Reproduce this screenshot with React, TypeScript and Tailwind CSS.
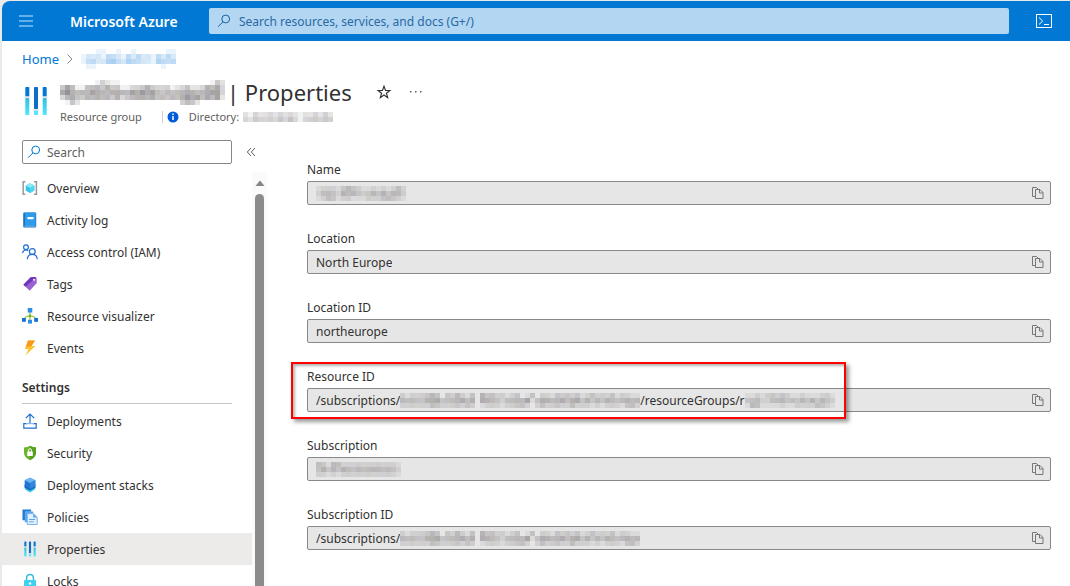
import type { ReactNode } from "react";

type MosaicProps = {
  rows: string[];
  colors?: string[];
  cell?: number;
};

const GRAYS = ["#6b6866", "#7c7480", "#6f7276", "#857a76"];
const BLUES = ["#2b88d8", "#3a93de"];

// Pixelated block used for redacted values, each digit is a cell's strength
function Mosaic({ rows, colors = GRAYS, cell = 5 }: MosaicProps) {
  const width = rows[0].length * cell;
  const height = rows.length * cell;
  return (
    <svg
      width={width}
      height={height}
      viewBox={`0 0 ${width} ${height}`}
      className="shrink-0"
      shapeRendering="crispEdges"
      aria-hidden="true"
    >
      {rows.map((row, y) =>
        row.split("").map((d, x) => (
          <rect
            key={`${x}-${y}`}
            x={x * cell}
            y={y * cell}
            width={cell}
            height={cell}
            fill={colors[(x * 3 + y) % colors.length]}
            opacity={Number(d) / 10}
          />
        ))
      )}
    </svg>
  );
}

const crumbMosaic = [
  "0001100100100000011",
  "1222133213232213232",
  "1332244324332214333",
  "0110000000000000100",
];

const titleMosaic = [
  "000000013211000000000000000000142",
  "465114554544113345433312342235563",
  "685555665556556676654545565556673",
  "356445555545345565645454676656562",
  "014200000000000000000000354200000",
];

const directoryMosaic = ["213223232321223232", "324333343431334343"];

const nameMosaic = ["122213432112121232", "234324443234343442", "123312211122233321"];

const resourceMosaic = ["112123232112111221", "334223443334343432", "143111121122223321"];

const subscriptionMosaic = ["33143222222222221", "34343443434443432", "22121222222222221"];

const guidMosaic = [
  "212223430324213043322123013022132323123222312211",
  "434334553344535054432344451354445355343434434444",
  "222222332223232012221223320232232232221212221332",
];

function Magnifier({ className }: { className: string }) {
  return (
    <svg viewBox="0 0 14 14" fill="none" stroke="currentColor" className={className} aria-hidden="true">
      <circle cx="8.7" cy="5" r="3.9" />
      <path d="M5.9 7.9 1 12.8" />
    </svg>
  );
}

function PropertiesIcon({ className }: { className: string }) {
  return (
    <svg viewBox="0 0 24 30" className={className} aria-hidden="true">
      <defs>
        <linearGradient id="bar" x1="0" y1="0" x2="0" y2="1">
          <stop offset="0" stopColor="#32bedd" />
          <stop offset="1" stopColor="#50e6ff" />
        </linearGradient>
      </defs>
      <rect x="1.3" y="12" width="4" height="17" rx=".8" fill="url(#bar)" />
      <rect x="1.3" y="1" width="4" height="9.5" rx=".8" fill="#0078d4" />
      <rect x="10" y="24.5" width="4" height="4.5" rx=".8" fill="#50e6ff" />
      <rect x="10" y="1" width="4" height="22" rx=".8" fill="#0f6cc8" />
      <rect x="18.7" y="12" width="4" height="17" rx=".8" fill="url(#bar)" />
      <rect x="18.7" y="1" width="4" height="9.5" rx=".8" fill="#0078d4" />
      <path d="M.5 11.2h5.6M9.2 23.8h5.6M17.9 11.2h5.6" stroke="#d8dadd" strokeWidth="1.2" />
    </svg>
  );
}

function CopyIcon() {
  return (
    <svg viewBox="0 0 14 14" fill="none" stroke="#777" className="h-3.5 w-3.5" aria-hidden="true">
      <path d="M4.5 10.5h-3v-9h4L7 3" />
      <path d="M4.5 3.5H9l3 3v6H4.5z" />
      <path d="M8.5 3.5V7H12" />
    </svg>
  );
}

function NavSvg({ children }: { children: ReactNode }) {
  return (
    <svg viewBox="0 0 16 16" fill="none" className="h-4 w-4 shrink-0" aria-hidden="true">
      {children}
    </svg>
  );
}

const icons: Record<string, ReactNode> = {
  Overview: (
    <NavSvg>
      <path d="M3.4 1.8H1.2v12.4h2.2M12 1.8h2.4v12.4H12" stroke="#999" strokeWidth="1.5" />
      <path d="m8 3.2 4.3 2.4v4.9L8 13l-4.3-2.5V5.6z" fill="#32c5e8" />
      <path d="m8 3.2 4.3 2.4L8 8 3.7 5.6z" fill="#8beafa" />
      <path d="M8 8v5l4.3-2.5V5.6z" fill="#50d6f2" />
    </NavSvg>
  ),
  "Activity log": (
    <NavSvg>
      <rect x="1.2" y=".6" width="13" height="14.8" rx="1" fill="#1b72c0" />
      <rect x="3" y=".6" width="10.6" height="13.2" rx=".6" fill="#2f9cea" />
      <path d="M2.4 14.2h11.2" stroke="#8cc9f5" strokeWidth=".8" />
      <rect x="5.4" y="5" width="6.2" height="2.2" rx=".4" fill="#fff" />
    </NavSvg>
  ),
  "Access control (IAM)": (
    <NavSvg>
      <g stroke="#1f6ed4" strokeWidth="1.2">
        <circle cx="4" cy="3.2" r="2.4" />
        <circle cx="10.3" cy="7.5" r="2.9" />
        <path d="M.7 9.2C.8 7.2 2 6 4 6c.9 0 1.6.2 2.2.7M5.4 15.2c.1-3 1.9-4.8 4.9-4.8s4.8 1.8 4.9 4.8" />
      </g>
    </NavSvg>
  ),
  Tags: (
    <NavSvg>
      <path d="M8.7 1.2 13.5.9l1.1.9.2 5.1-7.1 7.8-6.3-6z" fill="#9a63d3" />
      <path d="M8.7 1.2 13.5.9 14 2 3.4 10.6l-2-1.9z" fill="#6d35b8" />
      <circle cx="12" cy="3.8" r="1.1" fill="#efe3fb" />
    </NavSvg>
  ),
  "Resource visualizer": (
    <NavSvg>
      <path d="M8 4v8M2.5 11.5c0-2.4 2-3.5 5.5-3.5s5.5 1.1 5.5 3.5" stroke="#86c440" strokeWidth="1.2" />
      <rect x="5.7" y="0" width="4.6" height="4.5" fill="#2b8fe8" />
      <rect x="0" y="10" width="3.8" height="3.8" fill="#1570cf" />
      <rect x="12.2" y="10" width="3.8" height="3.8" fill="#1570cf" />
      <rect x="6" y="11.8" width="4" height="3.8" fill="#2b8fe8" />
      <circle cx="8" cy="8" r="1.4" fill="#6fb52c" />
    </NavSvg>
  ),
  Events: (
    <NavSvg>
      <path d="M6 .6h7L9.5 6h4L3.4 15.6 6.6 9H2.8z" fill="#fdc22f" />
      <path d="M6 .6h7L9.5 6 4 7z" fill="#f79a1c" />
    </NavSvg>
  ),
  Deployments: (
    <NavSvg>
      <path d="M8 10V1.2M3.8 5.2 8 1l4.2 4.2" stroke="#1f6ed4" strokeWidth="1.2" />
      <path d="M5 10.6H1.8v4.6h12.4v-4.6H11" stroke="#1f6ed4" strokeWidth="1.2" />
      <path d="M4 10.6h8" stroke="#8ab6ee" strokeWidth="1.2" />
    </NavSvg>
  ),
  Security: (
    <NavSvg>
      <path d="M8 .8c2 1.4 3.8 1.6 6 1.7v5c0 3.7-2.5 6-6 7.8-3.5-1.8-6-4.1-6-7.8v-5C4.2 2.4 6 2.2 8 .8z" fill="#6bb52c" />
      <path d="M8 .8c2 1.4 3.8 1.6 6 1.7v5c0 3.7-2.5 6-6 7.8z" fill="#569f20" />
      <rect x="5.2" y="6.5" width="5.6" height="4.5" rx=".5" fill="#fff" />
      <path d="M6.5 7V5.3a1.5 1.5 0 0 1 3 0V7" stroke="#fff" />
    </NavSvg>
  ),
  "Deployment stacks": (
    <NavSvg>
      <path d="m2.8 9.5 5.2 3 5.2-3v2.8L8 15.5l-5.2-3.2z" fill="#36c3ea" />
      <path d="m2.5 7.5 5.5 3 5.5-3v2.9L8 13.6l-5.5-3.2z" fill="#1664b8" />
      <path d="m8 .8 5.3 2.5V9L8 12 2.7 9V3.3z" fill="#1f77d2" />
      <path d="m8 .8 5.3 2.5L8 6 2.7 3.3z" fill="#6db6f5" />
      <path d="M8 6v6l5.3-3V3.3z" fill="#3486dc" />
    </NavSvg>
  ),
  Policies: (
    <NavSvg>
      <path d="M.5.5h8.6v2.3H3.3v8.4H.5z" fill="#1f7ad4" />
      <path d="M2.8 2.6h8.4v2H5.4v8.6H2.8z" fill="#5ea9ec" />
      <path d="M5.3 4.6h6l3.9 3.9v7H5.3z" fill="#e4f1fd" stroke="#5aa3e8" strokeWidth=".8" />
      <path d="M11.2 4.6v4h4z" fill="#5aa3e8" />
      <path d="M7 10.5h6.3M7 12.8h4.8" stroke="#5aa3e8" />
    </NavSvg>
  ),
  Properties: <PropertiesIcon className="h-4 w-4 shrink-0" />,
  Locks: (
    <NavSvg>
      <path d="M4.6 7.5V4.8a3.4 3.4 0 0 1 6.8 0v2.7" stroke="#32bedd" strokeWidth="1.5" />
      <rect x="2" y="7" width="12" height="8.5" rx="1" fill="#40d0f0" />
      <circle cx="8" cy="10.5" r="1.2" fill="#fff" />
    </NavSvg>
  ),
};

const generalItems = [
  "Overview",
  "Activity log",
  "Access control (IAM)",
  "Tags",
  "Resource visualizer",
  "Events",
];

const settingsItems = [
  "Deployments",
  "Security",
  "Deployment stacks",
  "Policies",
  "Properties",
  "Locks",
];

type Field = {
  id: string;
  label: string;
  parts: (string | string[])[];
  highlighted?: boolean;
};

const fields: Field[] = [
  { id: "name", label: "Name", parts: [nameMosaic] },
  { id: "location", label: "Location", parts: ["North Europe"] },
  { id: "location-id", label: "Location ID", parts: ["northeurope"] },
  {
    id: "resource-id",
    label: "Resource ID",
    parts: ["/subscriptions/", guidMosaic, "/resourceGroups/r", resourceMosaic],
    highlighted: true,
  },
  { id: "subscription", label: "Subscription", parts: [subscriptionMosaic] },
  { id: "subscription-id", label: "Subscription ID", parts: ["/subscriptions/", guidMosaic] },
];

function NavItem({ label }: { label: string }) {
  const active = label === "Properties";
  return (
    <li>
      <a
        href="#"
        aria-current={active ? "page" : undefined}
        className={`flex h-8 items-center gap-[9px] pl-5 ${active ? "bg-[#edebe9]" : "hover:bg-[#f3f2f1]"}`}
      >
        {icons[label]}
        <span className="pt-0.5">{label}</span>
      </a>
    </li>
  );
}

function PropertyField({ id, label, parts, highlighted }: Field) {
  const hasText = parts.some((p) => typeof p === "string");
  return (
    <div className="relative">
      <label htmlFor={id} className="block h-5 leading-[18px]">
        {label}
      </label>
      <div className="flex h-6 items-center rounded-xs border border-[#8a8886] bg-[#e6e6e6] pr-[5px] pl-2">
        {!hasText && <Mosaic rows={parts[0] as string[]} />}
        {parts.map((part, i) =>
          typeof part === "string" ? (
            <input
              key={i}
              id={i === 0 ? id : undefined}
              aria-label={i === 0 ? undefined : label}
              readOnly
              value={part}
              className="field-sizing-content bg-transparent pt-0.5 outline-none"
            />
          ) : (
            hasText && <Mosaic key={i} rows={part} />
          )
        )}
        {!hasText && <input id={id} readOnly value="" className="min-w-0 flex-1 bg-transparent outline-none" />}
        <button type="button" aria-label={`Copy ${label}`} className="ml-auto">
          <CopyIcon />
        </button>
      </div>
      {highlighted && (
        <div className="pointer-events-none absolute -top-1.5 -left-4 h-[57px] w-[555px] border-2 border-[#ff0000] shadow-[3px_3px_4px_rgba(0,0,0,0.4),inset_2px_2px_3px_rgba(0,0,0,0.3)]" />
      )}
    </div>
  );
}

export default function App() {
  return (
    <div className="h-screen overflow-hidden bg-[#eaeaea] pt-px pl-0.5 font-['Noto_Sans','Segoe_UI',sans-serif] text-[12px] leading-4 text-[#323130]">
      <div className="flex h-full flex-col overflow-hidden rounded-tl-lg bg-white">
        <header className="flex h-10 shrink-0 items-center bg-[#0078d4] pr-[18px] pl-4 text-white">
          <button type="button" aria-label="Show portal menu" className="flex h-6 w-4 flex-col items-center justify-center gap-[3px]">
            <span className="h-0.5 w-3.5 bg-[#66b0ea]" />
            <span className="h-0.5 w-3.5 bg-[#66b0ea]" />
            <span className="h-0.5 w-3.5 bg-[#66b0ea]" />
          </button>
          <a href="#" className="ml-9 w-[139px] shrink-0 pt-0.5 text-[14px] font-semibold whitespace-nowrap">
            Microsoft Azure
          </a>
          <div className="flex h-[26px] flex-1 items-center gap-2 rounded-xs bg-[#b3d6f2] px-2 text-[#1c5f9f]">
            <Magnifier className="h-3.5 w-3.5" />
            <input
              type="text"
              aria-label="Search resources, services, and docs (G+/)"
              placeholder="Search resources, services, and docs (G+/)"
              className="flex-1 bg-transparent pt-0.5 outline-none placeholder:text-[#2a69a5]"
            />
          </div>
          <button type="button" aria-label="Cloud Shell" className="ml-[27px]">
            <svg viewBox="0 0 16 14" fill="none" stroke="#fff" className="h-3.5 w-4">
              <rect x=".5" y=".5" width="15" height="13" />
              <path d="M3 3.5 6.7 7 3 10.5M8 10.5h5" />
            </svg>
          </button>
        </header>

        <nav aria-label="Breadcrumb" className="flex h-9 shrink-0 items-center gap-2 pl-5">
          <a href="#" className="text-[13px] text-[#0078d4]">
            Home
          </a>
          <svg viewBox="0 0 6 12" fill="none" stroke="#8a8886" className="h-3 w-1.5" aria-hidden="true">
            <path d="m.5 1.5 4.5 4.5-4.5 4.5" />
          </svg>
          <Mosaic rows={crumbMosaic} colors={BLUES} />
        </nav>

        <div className="flex h-[63px] shrink-0 gap-3 pt-px pl-[22px]">
          <PropertiesIcon className="mt-2 h-[30px] w-6" />
          <div>
            <div className="flex h-7 items-center">
              <h1 className="flex items-center gap-0.5 text-[22px] leading-7">
                <Mosaic rows={titleMosaic} />
                <span className="whitespace-pre">| Properties</span>
              </h1>
              <button type="button" aria-label="Add to favorites" className="ml-6">
                <svg viewBox="0 0 16 16" fill="none" stroke="#323130" strokeWidth="1.1" className="h-4 w-4">
                  <path d="m8 2.2 1.5 4.3h4.400l-3.500 2.700 1.300 4.400L8 11l-3.700 2.600 1.300-4.400-3.500-2.700h4.400z" />
                </svg>
              </button>
              <button type="button" aria-label="More actions" className="ml-4">
                <svg viewBox="0 0 16 16" fill="#605e5c" className="h-4 w-4">
                  <rect x="2" y="7" width="1.5" height="1.5" />
                  <rect x="7" y="7" width="1.5" height="1.5" />
                  <rect x="12" y="7" width="1.5" height="1.5" />
                </svg>
              </button>
            </div>
            <div className="mt-px flex h-5 items-center text-[11px] text-[#605e5c]">
              <span>Resource group</span>
              <span className="ml-5 h-3 w-px bg-[#d2d0ce]" />
              <svg viewBox="0 0 12 12" className="ml-1 h-3 w-3" aria-hidden="true">
                <circle cx="6" cy="6" r="5.5" fill="#015cda" />
                <path d="M6 5v4M6 2.5V4" stroke="#fff" strokeWidth="1.5" />
              </svg>
              <span className="mr-1 ml-2.5">Directory:</span>
              <Mosaic rows={directoryMosaic} />
            </div>
          </div>
        </div>

        <div className="flex min-h-0 flex-1">
          <aside className="flex w-[265px] shrink-0 flex-col">
            <div className="flex h-8 shrink-0 items-start pl-5">
              <div className="flex h-6 w-[210px] items-center gap-1.5 rounded-xs border border-[#8a8886] px-1 text-[#0078d4]">
                <Magnifier className="h-3.5 w-3.5" />
                <input
                  type="text"
                  aria-label="Search"
                  placeholder="Search"
                  className="min-w-0 flex-1 bg-transparent pt-0.5 outline-none placeholder:text-[#605e5c]"
                />
              </div>
              <button type="button" aria-label="Collapse menu" className="ml-3.5 flex h-6 items-center">
                <svg viewBox="0 0 10 10" fill="none" stroke="#605e5c" className="h-2.5 w-2.5">
                  <path d="M5 1 1.3 5 5 9M9 1 5.3 5 9 9" />
                </svg>
              </button>
            </div>
            <div className="flex min-h-0 flex-1">
              <nav aria-label="Resource menu" className="min-w-0 flex-1 overflow-hidden">
                <ul>
                  {generalItems.map((label) => (
                    <NavItem key={label} label={label} />
                  ))}
                </ul>
                <h2 className="mr-5 ml-5 flex h-10 items-center border-b border-[#c8c6c4] pt-2 font-semibold">
                  Settings
                </h2>
                <ul className="pt-px">
                  {settingsItems.map((label) => (
                    <NavItem key={label} label={label} />
                  ))}
                </ul>
              </nav>
              <div className="flex w-[15px] shrink-0 flex-col items-center gap-2 bg-[#fafafa] pt-2" aria-hidden="true">
                <svg viewBox="0 0 10 6" className="h-1.5 w-2.5 shrink-0">
                  <path d="M5 .5 9.5 6h-9z" fill="#858585" />
                </svg>
                <div className="w-[9px] flex-1 rounded-t-full bg-[#8b8b8b]" />
              </div>
            </div>
          </aside>

          <main className="flex min-w-0 flex-1 flex-col gap-[25px] pt-[21px] pr-[19px] pl-10">
            {fields.map((field) => (
              <PropertyField key={field.id} {...field} />
            ))}
          </main>
        </div>
      </div>
    </div>
  );
}
